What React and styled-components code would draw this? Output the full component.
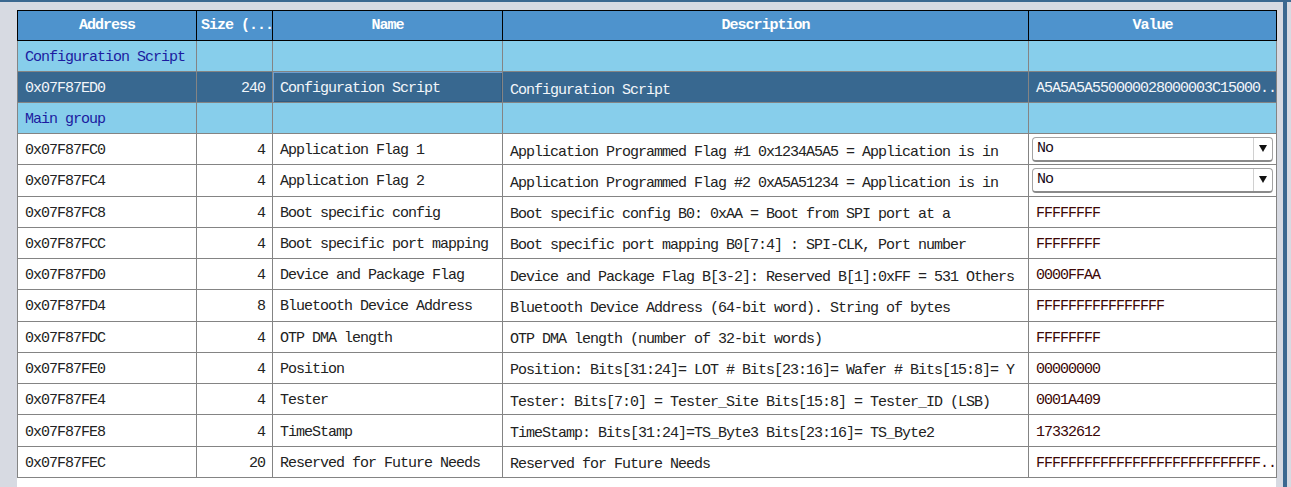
import React from "react";
import styled, { createGlobalStyle } from "styled-components";

const GlobalStyle = createGlobalStyle`
  html, body { margin: 0; padding: 0; }
  body {
    background: #d7dae2;
    overflow: hidden;
    font-family: "Liberation Mono", "DejaVu Sans Mono", monospace;
  }
`;

const Frame = styled.div`
  width: 1291px;
  height: 487px;
  box-sizing: border-box;
  border-top: 2px solid #3b6890;
  display: flex;
  background: #d7dae2;
`;

const Main = styled.div`
  padding: 8px 0 0 17px;
  display: flex;
  flex-direction: column;
`;

const TableArea = styled.div`
  width: 1259px;
  flex: 1;
  background: #ffffff;
`;

const Gutter = styled.div`
  width: 4px;
  margin-left: 7px;
  background: #3b6890;
`;

const Table = styled.table`
  border-collapse: collapse;
  table-layout: fixed;
  width: 1259px;
  font-size: 15px;
  letter-spacing: -1px;
`;

const Th = styled.th`
  height: 29px;
  padding: 0 4px;
  background: #4e93cd;
  color: #ffffff;
  font-weight: bold;
  text-align: ${(p) => (p.$left ? "left" : "center")};
  border: 1px solid #000000;
  white-space: nowrap;
  overflow: hidden;
  text-overflow: clip;
`;

const Tr = styled.tr`
  height: ${(p) => p.$h}px;
  background: ${(p) =>
    p.$kind === "group" ? "#87ceeb" : p.$kind === "selected" ? "#386890" : "#ffffff"};
`;

const Td = styled.td`
  border: 1px solid #848484;
  padding: ${(p) => (p.$low ? "6px 7px 0 7px" : "3px 7px 0 7px")};
  text-align: ${(p) => (p.$right ? "right" : "left")};
  white-space: nowrap;
  overflow: hidden;
  color: ${(p) =>
    p.$kind === "group"
      ? "#1c1ca0"
      : p.$kind === "selected"
      ? "#f2f6fa"
      : p.$value
      ? "#3c0606"
      : "#222222"};
  box-shadow: ${(p) => (p.$focus ? "inset 1px 1px 0 #6f9fd0, inset -1px -1px 0 #2e5a80" : "none")};
  vertical-align: middle;
`;

const SelectCell = styled.td`
  border: 1px solid #848484;
  padding: 0 3px 0 3px;
  vertical-align: middle;
`;

const SelectBox = styled.div`
  height: 25px;
  box-sizing: border-box;
  border: 1px solid #a3a3a3;
  border-bottom: 2px solid #8a8a8a;
  border-radius: 4px;
  background: #ffffff;
  display: flex;
  align-items: center;
  color: #1a0a1a;
`;

const SelectText = styled.span`
  flex: 1;
  padding-left: 4px;
`;

const Arrow = styled.span`
  width: 18px;
  height: 100%;
  border-left: 1px solid #d0d0d0;
  display: flex;
  align-items: center;
  justify-content: center;
  &::after {
    content: "";
    border-left: 4px solid transparent;
    border-right: 4px solid transparent;
    border-top: 7px solid #111111;
  }
`;

const rows = [
  { kind: "group", label: "Configuration Script" },
  {
    kind: "selected",
    addr: "0x07F87ED0",
    size: "240",
    name: "Configuration Script",
    desc: "Configuration Script",
    value: "A5A5A5A550000028000003C15000..",
  },
  { kind: "group", label: "Main group" },
  { addr: "0x07F87FC0", size: "4", name: "Application Flag 1", desc: "Application Programmed Flag #1 0x1234A5A5 = Application is in", select: "No" },
  { addr: "0x07F87FC4", size: "4", name: "Application Flag 2", desc: "Application Programmed Flag #2 0xA5A51234 = Application is in", select: "No" },
  { addr: "0x07F87FC8", size: "4", name: "Boot specific config", desc: "Boot specific config B0: 0xAA = Boot from SPI port at a", value: "FFFFFFFF" },
  { addr: "0x07F87FCC", size: "4", name: "Boot specific port mapping", desc: "Boot specific port mapping B0[7:4] : SPI-CLK, Port number", value: "FFFFFFFF" },
  { addr: "0x07F87FD0", size: "4", name: "Device and Package Flag", desc: "Device and Package Flag B[3-2]: Reserved B[1]:0xFF = 531 Others", value: "0000FFAA" },
  { addr: "0x07F87FD4", size: "8", name: "Bluetooth Device Address", desc: "Bluetooth Device Address (64-bit word). String of bytes", value: "FFFFFFFFFFFFFFFF" },
  { addr: "0x07F87FDC", size: "4", name: "OTP DMA length", desc: "OTP DMA length (number of 32-bit words)", value: "FFFFFFFF" },
  { addr: "0x07F87FE0", size: "4", name: "Position", desc: "Position: Bits[31:24]= LOT # Bits[23:16]= Wafer # Bits[15:8]= Y", value: "00000000" },
  { addr: "0x07F87FE4", size: "4", name: "Tester", desc: "Tester: Bits[7:0] = Tester_Site Bits[15:8] = Tester_ID (LSB)", value: "0001A409" },
  { addr: "0x07F87FE8", size: "4", name: "TimeStamp", desc: "TimeStamp: Bits[31:24]=TS_Byte3 Bits[23:16]= TS_Byte2", value: "17332612" },
  { addr: "0x07F87FEC", size: "20", name: "Reserved for Future Needs", desc: "Reserved for Future Needs", value: "FFFFFFFFFFFFFFFFFFFFFFFFFFFF.." },
];

export default function App() {
  return (
    <>
      <GlobalStyle />
      <Frame>
        <Main>
          <TableArea>
            <Table>
              <colgroup>
                <col style={{ width: 179 }} />
                <col style={{ width: 76 }} />
                <col style={{ width: 230 }} />
                <col style={{ width: 526 }} />
                <col style={{ width: 248 }} />
              </colgroup>
              <thead>
                <tr>
                  <Th>Address</Th>
                  <Th $left>Size (...</Th>
                  <Th>Name</Th>
                  <Th>Description</Th>
                  <Th>Value</Th>
                </tr>
              </thead>
              <tbody>
                {rows.map((r, i) => {
                  const h = r.kind ? 31 : 31.27;
                  if (r.kind === "group") {
                    return (
                      <Tr key={i} $kind="group" $h={h}>
                        <Td $kind="group">{r.label}</Td>
                        <Td $kind="group" />
                        <Td $kind="group" />
                        <Td $kind="group" />
                        <Td $kind="group" />
                      </Tr>
                    );
                  }
                  const k = r.kind;
                  return (
                    <Tr key={i} $kind={k} $h={h}>
                      <Td $kind={k}>{r.addr}</Td>
                      <Td $kind={k} $right>{r.size}</Td>
                      <Td $kind={k} $focus={k === "selected"}>{r.name}</Td>
                      <Td $kind={k} $low>{r.desc}</Td>
                      {r.select ? (
                        <SelectCell>
                          <SelectBox>
                            <SelectText>{r.select}</SelectText>
                            <Arrow />
                          </SelectBox>
                        </SelectCell>
                      ) : (
                        <Td $kind={k} $value>{r.value}</Td>
                      )}
                    </Tr>
                  );
                })}
              </tbody>
            </Table>
          </TableArea>
        </Main>
        <Gutter />
      </Frame>
    </>
  );
}
